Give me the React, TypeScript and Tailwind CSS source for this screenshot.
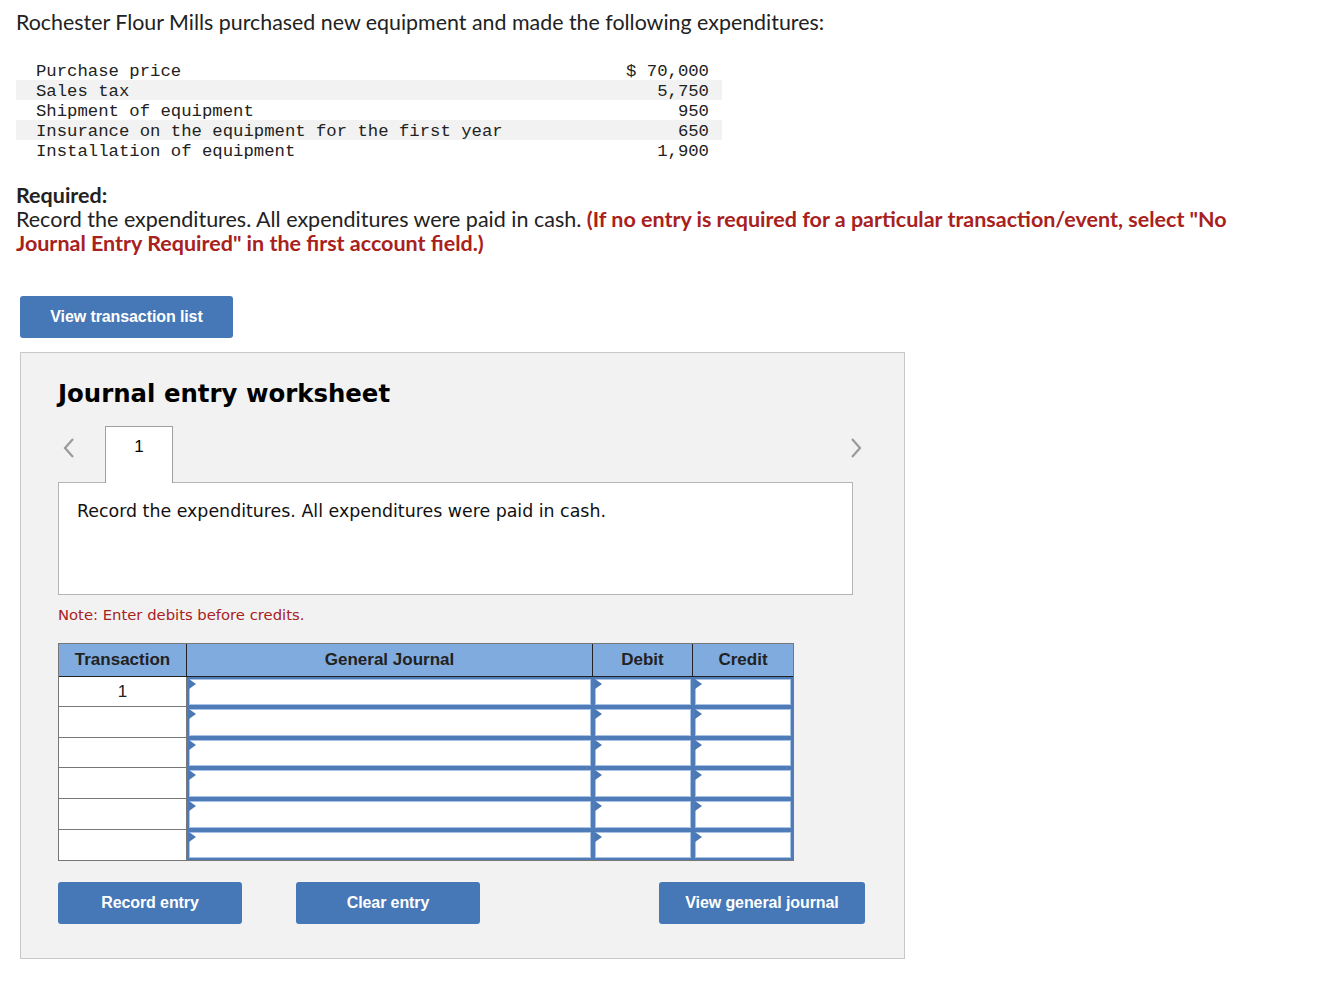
const expenses = [
  { label: "Purchase price", amount: "$ 70,000" },
  { label: "Sales tax", amount: "5,750" },
  { label: "Shipment of equipment", amount: "950" },
  { label: "Insurance on the equipment for the first year", amount: "650" },
  { label: "Installation of equipment", amount: "1,900" },
];

const rowHeights = ["h-[30px]", "h-[31px]", "h-[30px]", "h-[31px]", "h-[31px]", "h-[30px]"];

function InputCell() {
  return (
    <div className="relative bg-white border-2 border-[#4f7cb8] shadow-[inset_0_0_0_1px_#a9c3e7]">
      {/* little flag in the corner */}
      <span className="absolute top-0 left-0 w-0 h-0 border-y-[5px] border-y-transparent border-l-[7px] border-l-[#4a78b4]" />
    </div>
  );
}

function Chevron({ dir }: { dir: "left" | "right" }) {
  return (
    <svg width="14" height="22" viewBox="0 0 14 22" fill="none">
      {dir === "left" ? (
        <polyline points="11,2 3,11 11,20" stroke="#9a9a9a" strokeWidth="2.2" />
      ) : (
        <polyline points="3,2 11,11 3,20" stroke="#9a9a9a" strokeWidth="2.2" />
      )}
    </svg>
  );
}

export default function App() {
  const btn =
    "h-[42px] rounded-[3px] bg-[#4677b6] text-white font-bold text-[16px] tracking-[-0.1px] font-['Liberation_Sans',Arial,sans-serif]";

  return (
    <div className="min-h-screen bg-white pl-4 pt-[9px] pb-10 font-['Lato','Open_Sans',sans-serif] text-[#222]">
      <p className="text-[21.4px] leading-[26px]">
        Rochester Flour Mills purchased new equipment and made the following expenditures:
      </p>

      {/* expenditures table */}
      <div className="mt-[25px] w-[706px] font-['Liberation_Mono','Courier_New',monospace] text-[17.3px] leading-[20px] text-[#222]">
        {expenses.map((e, i) => (
          <div
            key={e.label}
            className={`flex justify-between pl-5 pr-[13px] pt-[2px] h-[20px] ${i % 2 === 1 ? "bg-[#f2f2f2]" : ""}`}
          >
            <span>{e.label}</span>
            <span>{e.amount}</span>
          </div>
        ))}
      </div>

      <div className="mt-[23px] text-[21.5px] leading-[24px]">
        <p className="font-bold">Required:</p>
        <p className="whitespace-nowrap">
          Record the expenditures. All expenditures were paid in cash.{" "}
          <span className="font-bold text-[#a8211d]">
            (If no entry is required for a particular transaction/event, select "No
            <br />
            Journal Entry Required" in the first account field.)
          </span>
        </p>
      </div>

      <button className={`${btn} mt-[41px] ml-1 w-[213px]`}>View transaction list</button>

      {/* worksheet */}
      <div className="mt-[14px] ml-1 w-[885px] bg-[#f2f2f2] border border-[#c8c8c8] pl-[37px] pt-[25px] pb-[34px]">
        <h2 className="font-['DejaVu_Sans',Verdana,sans-serif] font-bold text-[24.4px] leading-[32px] text-black">
          Journal entry worksheet
        </h2>

        <div className="mt-[16px] w-[806px] flex items-start">
          <div className="w-[47px] flex pl-[4px] pt-[11px]">
            <Chevron dir="left" />
          </div>
          <div className="relative z-10 -mb-px w-[68px] h-[57px] bg-white border border-b-0 border-[#a0a0a0] flex justify-center pt-[9px] font-['Liberation_Sans',Arial,sans-serif] text-[17px] leading-[22px] text-black">
            1
          </div>
          <div className="flex-1" />
          <div className="pt-[11px] pr-[1px]">
            <Chevron dir="right" />
          </div>
        </div>

        <div className="w-[795px] h-[113px] bg-white border border-[#b4b4b4] pl-[18px] pt-[17px] font-['DejaVu_Sans',Verdana,sans-serif] text-[17.4px] leading-[22px] text-[#111]">
          Record the expenditures. All expenditures were paid in cash.
        </div>

        <p className="mt-[10px] font-['DejaVu_Sans',Verdana,sans-serif] text-[14.8px] leading-[20px] text-[#a8211d]">
          Note: Enter debits before credits.
        </p>

        {/* journal table */}
        <div className="mt-[18px] w-[736px] border border-[#777] font-['Liberation_Sans',Arial,sans-serif]">
          <div className="grid grid-cols-[128px_406px_100px_100px] h-[33px] bg-[#80abdf] border-b border-[#222] text-[17px] font-bold text-[#222]">
            <div className="flex items-center justify-center border-r border-[#222]">Transaction</div>
            <div className="flex items-center justify-center border-r border-[#222]">General Journal</div>
            <div className="flex items-center justify-center border-r border-[#222]">Debit</div>
            <div className="flex items-center justify-center">Credit</div>
          </div>
          {rowHeights.map((h, i) => (
            <div key={i} className={`grid grid-cols-[128px_406px_100px_100px] ${h}`}>
              <div
                className={`flex items-center justify-center bg-white border-r border-[#777] text-[17px] text-[#222] ${
                  i < 5 ? "border-b" : ""
                }`}
              >
                {i === 0 ? "1" : ""}
              </div>
              <InputCell />
              <InputCell />
              <InputCell />
            </div>
          ))}
        </div>

        <div className="mt-[21px] w-[807px] flex items-center">
          <button className={`${btn} w-[184px]`}>Record entry</button>
          <button className={`${btn} w-[184px] ml-[54px]`}>Clear entry</button>
          <div className="flex-1" />
          <button className={`${btn} w-[206px]`}>View general journal</button>
        </div>
      </div>
    </div>
  );
}
